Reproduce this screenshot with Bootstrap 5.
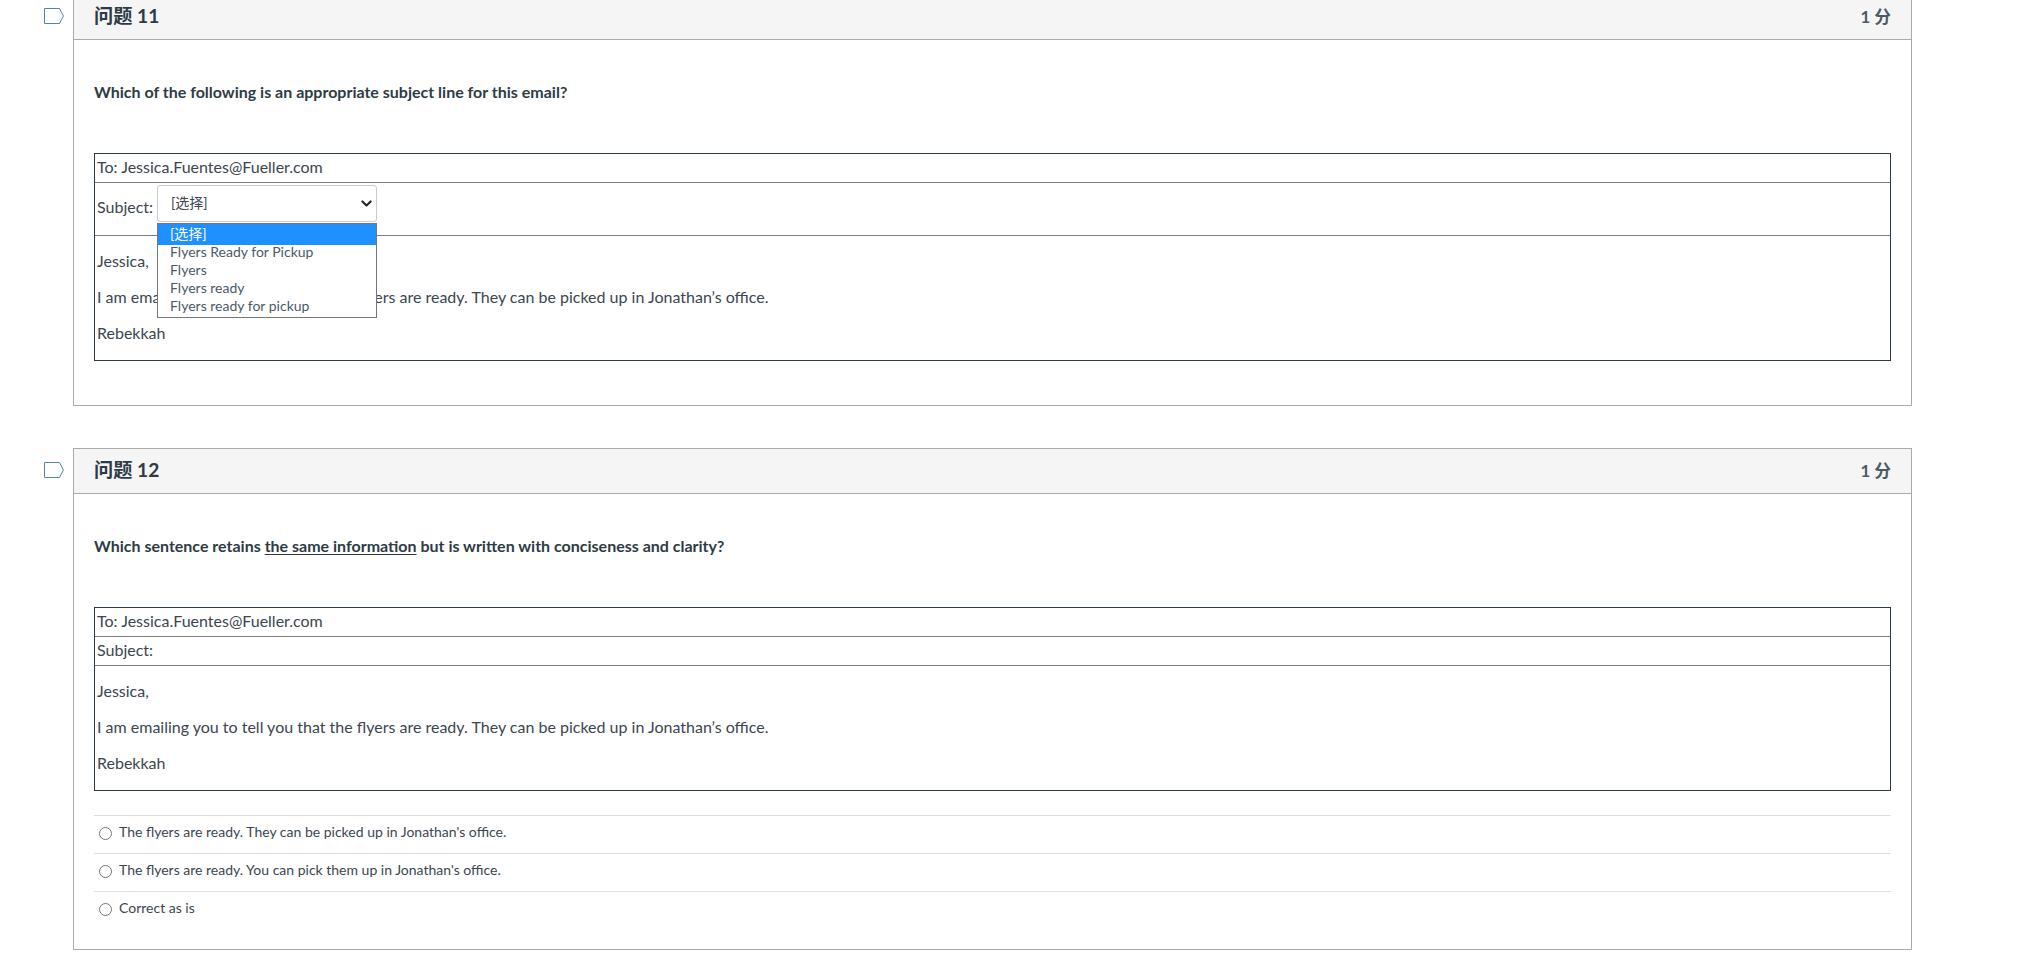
<!DOCTYPE html>
<html lang="zh-CN">
<head>
<meta charset="utf-8">
<title>Quiz</title>
<link href="https://cdn.jsdelivr.net/npm/bootstrap@5.3.0/dist/css/bootstrap.min.css" rel="stylesheet">
<style>
html,body{height:959px;overflow:hidden;background:#fff}
body{font-family:"Lato","Noto Sans CJK SC",sans-serif;color:#3b4650;font-size:16px;line-height:24px}
.quiz-wrap{width:1912px;margin-top:-6px}
.q-item{margin-bottom:42px}
.tag-col{width:73px;flex:none;padding:14px 0 0 44px}
.q-card{border:1px solid #aaa;border-radius:0;flex:1 1 auto;min-width:0;background:#fff}
.q-head{height:45px;background:#f5f5f5;border-bottom:1px solid #aaa;border-radius:0!important;padding:0 20px;color:#2d3b45}
.q-title{font-size:19.2px;font-weight:700;line-height:41px}
.q-pts{font-size:16.8px;font-weight:700;line-height:44px;color:#4b5a65}
.q-body{padding:42px 20px 0}
.q-text{font-size:16px;font-weight:700;line-height:20px;margin:0 0 51px;color:#2d3b45}
.q-text u{text-underline-offset:2px}
.mail-box{border:1px solid #2d3b45}
.mail-row{padding:1px 2px 3px;line-height:24px;border-bottom:1px solid #808080}
.mail-row:last-child{border-bottom:0}
.mail-row p{margin:16px 0;line-height:20px}
.mail-row p:first-child{margin-top:15px}
.mail-row p:last-child{margin-bottom:17px}
.mail-row-pick{height:53px;gap:4px;padding-top:2px}
.subj-label{margin-top:10px}
.pick-wrap{width:220px}
.pick-select{width:220px;height:37px;padding:0 0 2px 13px;border:1px solid #c7cdd1;border-radius:3px;font-size:14px;color:#3b4650;background-image:url("data:image/svg+xml,%3csvg xmlns='http://www.w3.org/2000/svg' viewBox='0 0 16 16'%3e%3cpath fill='none' stroke='%23222' stroke-linecap='round' stroke-linejoin='round' stroke-width='3' d='m2 5 6 6 6-6'/%3e%3c/svg%3e");background-size:11px 11px;background-position:right 4px center}
.pick-pop{display:block;top:38px;left:0;right:0;min-width:0;padding:0;margin:0;border:1px solid #767676;border-radius:0;font-size:14px}
.pick-pop .dropdown-item{padding:0 12px 4px;line-height:14px;color:#4b5a65}
.pick-pop .dropdown-item:first-child{padding-bottom:2px;line-height:19px}
.pick-pop .dropdown-item.active{background:#1e90ff;color:#fff}
.ans-list{margin-top:24px;padding-bottom:20px}
.ans-row{height:38px;border-top:1px solid #ddd;padding:4px 0 0 5px;margin:0;font-size:14px;line-height:24px;gap:7px;color:#3b4650}
.ans-row .form-check-input{width:13px;height:13px;margin:7px 0 0;flex:none;border:1px solid #767676;background-color:#fff;float:none}
.spacer-end{padding-bottom:44px}
</style>
</head>
<body>
<div class="quiz-wrap">

<div class="q-item d-flex">
  <div class="tag-col">
    <svg width="20" height="16" viewBox="0 0 20 16" aria-hidden="true" class="d-block"><path d="M.5.5H15.500L19.400 8 15.500 15.500H.5Z" fill="#fff" stroke="#5585a3" stroke-linejoin="miter"/></svg>
  </div>
  <div class="card q-card">
    <div class="card-header q-head d-flex justify-content-between">
      <span class="q-title">问题 11</span><span class="q-pts">1 分</span>
    </div>
    <div class="q-body spacer-end">
      <p class="q-text">Which of the following is an appropriate subject line for this email?</p>
      <div class="mail-box">
        <div class="mail-row">To: Jessica.Fuentes@Fueller.com</div>
        <div class="mail-row mail-row-pick d-flex">
          <span class="subj-label">Subject:</span>
          <div class="pick-wrap position-relative">
            <select class="form-select pick-select"><option>[选择]</option></select>
            <div class="dropdown-menu pick-pop">
              <div class="dropdown-item active">[选择]</div>
              <div class="dropdown-item">Flyers Ready for Pickup</div>
              <div class="dropdown-item">Flyers</div>
              <div class="dropdown-item">Flyers ready</div>
              <div class="dropdown-item">Flyers ready for pickup</div>
            </div>
          </div>
        </div>
        <div class="mail-row py-0">
          <p>Jessica,</p>
          <p>I am emailing you to tell you that the flyers are ready. They can be picked up in Jonathan’s office.</p>
          <p>Rebekkah</p>
        </div>
      </div>
    </div>
  </div>
</div>

<div class="q-item d-flex">
  <div class="tag-col">
    <svg width="20" height="16" viewBox="0 0 20 16" aria-hidden="true" class="d-block"><path d="M.5.5H15.500L19.400 8 15.500 15.500H.5Z" fill="#fff" stroke="#5585a3" stroke-linejoin="miter"/></svg>
  </div>
  <div class="card q-card">
    <div class="card-header q-head d-flex justify-content-between">
      <span class="q-title">问题 12</span><span class="q-pts">1 分</span>
    </div>
    <div class="q-body">
      <p class="q-text">Which sentence retains <u>the same information</u> but is written with conciseness and clarity?</p>
      <div class="mail-box">
        <div class="mail-row">To: Jessica.Fuentes@Fueller.com</div>
        <div class="mail-row">Subject:</div>
        <div class="mail-row py-0">
          <p>Jessica,</p>
          <p>I am emailing you to tell you that the flyers are ready. They can be picked up in Jonathan’s office.</p>
          <p>Rebekkah</p>
        </div>
      </div>
      <div class="ans-list">
        <label class="ans-row d-flex"><input class="form-check-input" type="radio" name="q12"><span>The flyers are ready. They can be picked up in Jonathan's office.</span></label>
        <label class="ans-row d-flex"><input class="form-check-input" type="radio" name="q12"><span>The flyers are ready. You can pick them up in Jonathan's office.</span></label>
        <label class="ans-row d-flex"><input class="form-check-input" type="radio" name="q12"><span>Correct as is</span></label>
      </div>
    </div>
  </div>
</div>

</div>
<script src="https://cdn.jsdelivr.net/npm/bootstrap@5.3.0/dist/js/bootstrap.bundle.min.js"></script>
</body>
</html>
